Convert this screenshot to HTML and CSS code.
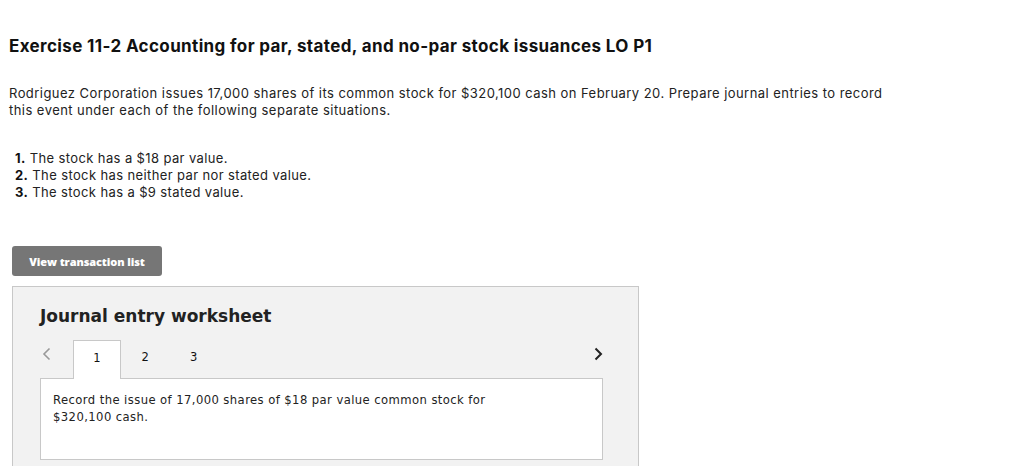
FILE: index.html
```html
<!DOCTYPE html>
<html>
<head>
<meta charset="utf-8">
<link rel="stylesheet" href="styles.css">
</head>
<body>
<div class="page">
  <h1 class="title">Exercise 11-2 Accounting for par, stated, and no-par stock issuances LO P1</h1>
  <p class="intro">Rodriguez Corporation issues 17,000 shares of its common stock for $320,100 cash on February 20. Prepare journal entries to record<br>this event under each of the following separate situations.</p>
  <ol class="list">
    <li><b>1.</b> The stock has a $18 par value.</li>
    <li><b>2.</b> The stock has neither par nor stated value.</li>
    <li><b>3.</b> The stock has a $9 stated value.</li>
  </ol>
  <button class="btn">View transaction list</button>
  <div class="panel">
    <h2 class="ws-title">Journal entry worksheet</h2>
    <div class="tabs">
      <span class="arrow left"><svg width="9" height="14" viewBox="0 0 9 14"><path d="M7.5 1.5 L2 7 L7.5 12.5" fill="none" stroke="#999" stroke-width="1.6"/></svg></span>
      <span class="tab active">1</span>
      <span class="tab">2</span>
      <span class="tab">3</span>
      <span class="spacer"></span>
      <span class="arrow right"><svg width="9" height="14" viewBox="0 0 9 14"><path d="M1.5 1.5 L7 7 L1.5 12.5" fill="none" stroke="#222" stroke-width="2"/></svg></span>
    </div>
    <div class="content">Record the issue of 17,000 shares of $18 par value common stock for<br>$320,100 cash.</div>
  </div>
</div>
</body>
</html>
```
FILE: styles.css
```css
* { box-sizing: border-box; }
html, body { margin: 0; padding: 0; background: #fff; }
body { font-family: Inter, "Open Sans", sans-serif; color: #111; }
.page { padding: 0 0 0 9px; width: 1024px; height: 466px; overflow: hidden; }
.title { margin: 0; padding-top: 35px; font-size: 17px; font-weight: 700; line-height: 22px; letter-spacing: 0.37px; color: #111; }
.intro { margin: 28px 0 0 0; font-size: 13px; line-height: 17px; color: #222; letter-spacing: 0.45px; }
.list { list-style: none; margin: 31px 0 0 0; padding: 0 0 0 6px; font-size: 13px; line-height: 17px; color: #222; letter-spacing: 0.38px; }
.list b { font-weight: 700; color: #111; }
.btn { display: block; margin: 45px 0 0 3px; width: 150px; height: 30px; background: #767676; color: #fff; border: none; border-radius: 3px; font-family: "Open Sans", sans-serif; font-weight: 800; font-size: 11px; letter-spacing: -0.1px; padding: 0; }
.panel { margin: 10px 0 0 3px; width: 627px; height: 190px; background: #f2f2f2; border: 1px solid #c8c8c8; padding: 0 35px 0 27px; font-family: Verdana, "DejaVu Sans", sans-serif; }
.ws-title { margin: 18px 0 0 0; font-size: 17px; font-weight: 700; line-height: 22px; color: #222; font-family: Verdana, "DejaVu Sans", sans-serif; letter-spacing: 0; }
.tabs { display: flex; align-items: flex-end; margin-top: 13px; height: 38px; }
.arrow { display: flex; align-items: center; height: 38px; padding-bottom: 10px; }
.arrow.left { width: 33px; padding-left: 2px; }
.tab { width: 48.5px; height: 38px; display: flex; align-items: center; justify-content: center; font-size: 11.5px; color: #111; padding-bottom: 5px; }
.tab.active { background: #fff; border: 1px solid #c8c8c8; border-bottom: none; width: 48px; position: relative; z-index: 1; margin-bottom: -1px; height: 39px; }
.spacer { flex: 1; }
.content { margin-left: 0; width: 563px; height: 82px; background: #fff; border: 1px solid #c8c8c8; padding: 13px 12px; font-size: 11.6px; letter-spacing: 0.42px; line-height: 17px; color: #222; }
```
